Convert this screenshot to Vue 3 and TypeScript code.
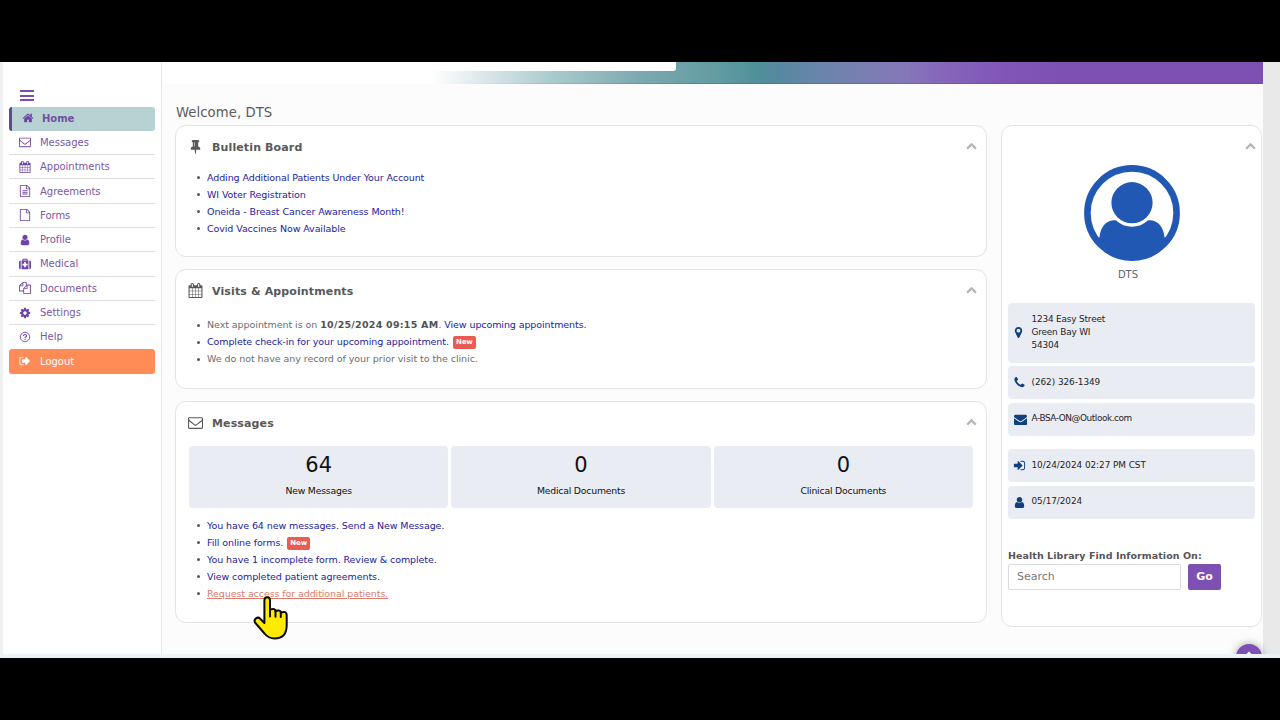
<script setup lang="ts">
interface NavItem {
  label: string
  icon: string
  kind?: 'active' | 'logout'
}

const calendar =
  'M192 1664h288v-288h-288v288zm352 0h320v-288h-320v288zm-352-352h288v-320h-288v320zm352 0h320v-320h-320v320zm-352-384h288v-288h-288v288zm736 736h320v-288h-320v288zm-384-736h320v-288h-320v288zm768 736h288v-288h-288v288zm-384-352h320v-320h-320v320zm-352-864v-288q0-13-9.5-22.5t-22.5-9.5h-64q-13 0-22.5 9.5t-9.5 22.5v288q0 13 9.5 22.5t22.5 9.5h64q13 0 22.5-9.5t9.5-22.5zm736 864h288v-320h-288v320zm-384-384h320v-288h-320v288zm384 0h288v-288h-288v288zm32-480v-288q0-13-9.5-22.5t-22.5-9.5h-64q-13 0-22.5 9.5t-9.5 22.5v288q0 13 9.5 22.5t22.5 9.5h64q13 0 22.5-9.5t9.5-22.5zm384-64v1280q0 52-38 90t-90 38h-1408q-52 0-90-38t-38-90v-1280q0-52 38-90t90-38h128v-96q0-66 47-113t113-47h64q66 0 113 47t47 113v96h384v-96q0-66 47-113t113-47h64q66 0 113 47t47 113v96h128q52 0 90 38t38 90z'
const fileOutline =
  'M1596 380q28 28 48 76t20 88v1152q0 40-28 68t-68 28h-1344q-40 0-68-28t-28-68v-1600q0-40 28-68t68-28h896q40 0 88 20t76 48zm-444-244v376h376q-10-29-22-41l-313-313q-12-12-41-22zm384 1528v-1024h-416q-40 0-68-28t-28-68v-416h-768v1536h1280z'

const icons: Record<string, string> = {
  home: 'M1472 992v480q0 26-19 45t-45 19h-384v-384h-256v384h-384q-26 0-45-19t-19-45v-480q0-1 .5-3t.5-3l575-474 575 474q1 2 1 6zm223-69l-62 74q-8 9-21 11h-3q-13 0-21-7l-692-577-692 577q-12 8-24 7-13-2-21-11l-62-74q-8-10-7-23.5t11-21.5l719-599q32-26 76-26t76 26l244 204v-195q0-14 9-23t23-9h192q14 0 23 9t9 23v408l219 182q10 8 11 21.5t-7 23.5z',
  mailOutline:
    'M1664 1504v-768q-32 36-69 66-268 206-426 338-51 43-83 67t-86.5 48.5-102.5 24.5h-2q-48 0-102.5-24.5t-86.5-48.5-83-67q-158-132-426-338-37-30-69-66v768q0 13 9.5 22.5t22.5 9.5h1472q13 0 22.5-9.5t9.5-22.5zm0-1051v-24.5l-.5-13-3-12.5-5.5-9-9-7.5-14-2.5h-1472q-13 0-22.5 9.5t-9.5 22.5q0 168 147 284 193 152 401 317 6 5 35 29.5t46 37.5 44.5 31.5 50.5 27.5 43 9h2q20 0 43-9t50.5-27.5 44.5-31.5 46-37.5 35-29.5q208-165 401-317 54-43 100.5-115.5t46.5-131.5zm128-37v1088q0 66-47 113t-113 47h-1472q-66 0-113-47t-47-113v-1088q0-66 47-113t113-47h1472q66 0 113 47t47 113z',
  calendar,
  file: fileOutline,
  fileText: fileOutline + 'M512 768h768v128h-768zM512 1024h768v128h-768zM512 1280h768v128h-768z',
  user: 'M1536 1399q0 109-62.5 187t-150.5 78h-854q-88 0-150.5-78t-62.5-187q0-85 8.5-160.5t31.5-152 58.5-131 94-89 134.5-34.5q131 128 313 128t313-128q76 0 134.5 34.5t94 89 58.5 131 31.5 152 8.5 160.5zm-256-887q0 159-112.5 271.5t-271.5 112.5-271.5-112.5-112.5-271.5 112.5-271.5 271.5-112.5 271.5 112.5 112.5 271.5z',
  medkit:
    'M1280 1088v-192q0-14-9-23t-23-9h-224v-224q0-14-9-23t-23-9h-192q-14 0-23 9t-9 23v224h-224q-14 0-23 9t-9 23v192q0 14 9 23t23 9h224v224q0 14 9 23t23 9h192q14 0 23-9t9-23v-224h224q14 0 23-9t9-23zm-640-704h512v-128h-512v128zm-384 0v1280h-32q-92 0-158-66t-66-158v-832q0-92 66-158t158-66h32zm1152 0v1280h-1024v-1280h128v-160q0-40 28-68t68-28h576q40 0 68 28t28 68v160h128zm384 224v832q0 92-66 158t-158 66h-32v-1280h32q92 0 158 66t66 158z',
  files:
    'M1696 384q40 0 68 28t28 68v1216q0 40-28 68t-68 28h-960q-40 0-68-28t-28-68v-288h-544q-40 0-68-28t-28-68v-672q0-40 20-88t48-76l408-408q28-28 76-48t88-20h416q40 0 68 28t28 68v328q68-40 128-40h416zm-544 213l-299 299h299v-299zm-640-384l-299 299h299v-299zm196 647l316-316v-416h-384v416q0 40-28 68t-68 28h-416v640h512v-256q0-40 20-88t48-76zm956 804v-1152h-384v416q0 40-28 68t-68 28h-416v640h896z',
  cog: 'M1152 896q0-106-75-181t-181-75-181 75-75 181 75 181 181 75 181-75 75-181zm512-109v222q0 12-8 23t-20 13l-185 28q-19 54-39 91 35 50 107 138 10 12 10 25t-9 23q-27 37-99 108t-94 71q-12 0-26-9l-138-108q-44 23-91 38-16 136-29 186-7 28-36 28h-222q-14 0-24.5-8.5t-11.5-21.5l-28-184q-49-16-90-37l-141 107q-10 9-25 9-14 0-25-11-126-114-165-168-7-10-7-23 0-12 8-23 15-21 51-66.5t54-70.5q-27-50-41-99l-183-27q-13-2-21-12.5t-8-23.5v-222q0-12 8-23t19-13l186-28q14-46 39-92-40-57-107-138-10-12-10-24 0-10 9-23 26-36 98.5-107.5t94.5-71.5q13 0 26 10l138 107q44-23 91-38 16-136 29-186 7-28 36-28h222q14 0 24.5 8.5t11.5 21.5l28 184q49 16 90 37l142-107q9-9 24-9 13 0 25 10 129 119 165 170 7 8 7 22 0 12-8 23-15 21-51 66.5t-54 70.5q26 50 41 98l183 28q13 2 21 12.5t8 23.5z',
  signOut:
    'M704 1440q0 4 1 20t.5 26.5-3 23.5-10 19.5-20.5 6.5h-320q-119 0-203.5-84.5t-84.5-203.5v-704q0-119 84.5-203.5t203.5-84.5h320q13 0 22.5 9.5t9.5 22.5q0 4 1 20t.5 26.5-3 23.5-10 19.5-20.5 6.5h-320q-66 0-113 47t-47 113v704q0 66 47 113t113 47h312l11.5 1 11.5 3 8 5.5 7 9 2 13.5zm928-544q0 26-19 45l-544 544q-19 19-45 19t-45-19-19-45v-288h-448q-26 0-45-19t-19-45v-384q0-26 19-45t45-19h448v-288q0-26 19-45t45-19 45 19l544 544q19 19 19 45z',
  signIn:
    'M1312 896q0 26-19 45l-544 544q-19 19-45 19t-45-19-19-45v-288h-448q-26 0-45-19t-19-45v-384q0-26 19-45t45-19h448v-288q0-26 19-45t45-19 45 19l544 544q19 19 19 45zm352-352v704q0 119-84.5 203.5t-203.5 84.5h-320q-13 0-22.5-9.5t-9.5-22.5q0-4-1-20t-.5-26.5 3-23.5 10-19.5 20.5-6.5h320q66 0 113-47t47-113v-704q0-66-47-113t-113-47h-312l-11.5-1-11.5-3-8-5.5-7-9-2-13.5q0-4-1-20t-.5-26.5 3-23.5 10-19.5 20.5-6.5h320q119 0 203.5 84.5t84.5 203.5z',
  pin: 'M1152 640q0-106-75-181t-181-75-181 75-75 181 75 181 181 75 181-75 75-181zm256 0q0 109-33 179l-364 774q-16 33-47.5 52t-67.5 19-67.5-19-46.5-52l-365-774q-33-70-33-179 0-212 150-362t362-150 362 150 150 362z',
  phone:
    'M1600 1240q0 27-10 70.5t-21 68.5q-21 50-122 106-94 51-186 51-27 0-53-3.5t-57.5-12.5-47-14.5-55.5-20.5-49-18q-98-35-175-83-127-79-264-216t-216-264q-48-77-83-175-3-9-18-49t-20.5-55.5-14.5-47-12.5-57.5-3.5-53q0-92 51-186 56-101 106-122 25-11 68.5-21t70.5-10q14 0 21 3 18 6 53 76 11 19 30 54t35 63.5 31 53.5q3 4 17.5 25t21.5 35.5 7 28.5q0 20-28.5 50t-62 55-62 53-28.5 46q0 9 5 22.5t8.5 20.5 14 24 11.5 19q76 137 174 235t235 174q2 1 19 11.5t24 14 20.5 8.5 22.5 5q18 0 46-28.5t53-62 55-62 50-28.5q14 0 28.5 7t35.5 21.5 25 17.5q25 15 53.5 31t63.5 35 54 30q70 35 76 53 3 7 3 21z',
  mail: 'M1792 710v794q0 66-47 113t-113 47h-1472q-66 0-113-47t-47-113v-794q44 49 101 87 362 246 497 345 57 42 92.5 65.5t94.5 48 110 24.5h2q51 0 110-24.5t94.5-48 92.5-65.5q170-123 498-345 57-39 100-87zm0-294q0 79-49 151t-122 123q-376 261-468 325-10 7-42.5 31t-54 38.5-52 32.5-57.5 27-50 9h-2q-23 0-50-9t-57.5-27-52-32.5-54-38.5-42.5-31q-91-64-262-182.5t-205-142.5q-62-42-117-115.5t-55-136.5q0-78 41.5-130t118.5-52h1472q65 0 112.5 47t47.5 113z',
  tack: 'M800 864v-448q0-14-9-23t-23-9-23 9-9 23v448q0 14 9 23t23 9 23-9 9-23zm672 352q0 26-19 45t-45 19h-429l-51 483q-2 12-10.5 20.5t-20.5 8.5h-1q-27 0-32-27l-76-485h-404q-26 0-45-19t-19-45q0-123 78.5-221.5t177.5-98.5v-512q-52 0-90-38t-38-90 38-90 90-38h640q52 0 90 38t38 90-38 90-90 38v512q99 0 177.5 98.5t78.5 221.5z',
  up: 'M1683 1331l-166 165q-19 19-45 19t-45-19l-531-531-531 531q-19 19-45 19t-45-19l-166-165q-19-19-19-45.5t19-45.5l742-741q19-19 45-19t45 19l742 741q19 19 19 45.5t-19 45.5z',
}

const nav: NavItem[] = [
  { label: 'Home', icon: 'home', kind: 'active' },
  { label: 'Messages', icon: 'mailOutline' },
  { label: 'Appointments', icon: 'calendar' },
  { label: 'Agreements', icon: 'fileText' },
  { label: 'Forms', icon: 'file' },
  { label: 'Profile', icon: 'user' },
  { label: 'Medical', icon: 'medkit' },
  { label: 'Documents', icon: 'files' },
  { label: 'Settings', icon: 'cog' },
  { label: 'Help', icon: 'help' },
  { label: 'Logout', icon: 'signOut', kind: 'logout' },
]

const bulletins: string[] = [
  'Adding Additional Patients Under Your Account',
  'WI Voter Registration',
  'Oneida - Breast Cancer Awareness Month!',
  'Covid Vaccines Now Available',
]

const stats = [
  { value: 64, label: 'New Messages' },
  { value: 0, label: 'Medical Documents' },
  { value: 0, label: 'Clinical Documents' },
]

const details = [
  { icon: 'pin', lines: ['1234 Easy Street', 'Green Bay WI', '54304'], kind: 'address' },
  { icon: 'phone', lines: ['(262) 326-1349'], kind: '' },
  { icon: 'mail', lines: ['A-BSA-ON@Outlook.com'], kind: 'email' },
  { icon: 'signIn', lines: ['10/24/2024 02:27 PM CST'], kind: '' },
  { icon: 'user', lines: ['05/17/2024'], kind: '' },
]
</script>

<template>
  <div class="screen">
    <div class="page">
      <aside class="sidebar">
        <button class="burger" aria-label="Menu"><i></i><i></i><i></i></button>
        <nav>
          <a v-for="n in nav" :key="n.label" class="nav-item" :class="n.kind">
            <svg v-if="n.icon === 'help'" class="ico" viewBox="0 0 1792 1792">
              <circle cx="896" cy="896" r="700" fill="none" stroke="currentColor" stroke-width="130" />
              <path d="M650 740q20-210 246-210t246 190q0 110-130 180t-116 140" fill="none" stroke="currentColor" stroke-width="170" />
              <path d="M800 1140h190v180h-190z" />
            </svg>
            <svg v-else class="ico" viewBox="0 0 1792 1792"><path :d="icons[n.icon]" /></svg>
            <span>{{ n.label }}</span>
          </a>
        </nav>
      </aside>

      <div class="body">
        <header class="banner"><div class="banner-field"></div></header>
        <div class="columns">
          <main class="main">
            <h1 class="welcome">Welcome, DTS</h1>

            <section class="card bulletin">
              <div class="card-head">
                <svg class="head-ico" viewBox="0 0 1792 1792"><path :d="icons.tack" /></svg>
                <h2>Bulletin Board</h2>
                <svg class="chev" viewBox="0 0 1792 1792"><path :d="icons.up" /></svg>
              </div>
              <ul>
                <li v-for="b in bulletins" :key="b"><a>{{ b }}</a></li>
              </ul>
            </section>

            <section class="card visits">
              <div class="card-head">
                <svg class="head-ico" viewBox="0 0 1792 1792"><path :d="icons.calendar" /></svg>
                <h2>Visits &amp; Appointments</h2>
                <svg class="chev" viewBox="0 0 1792 1792"><path :d="icons.up" /></svg>
              </div>
              <ul>
                <li>Next appointment is on <b>10/25/2024 09:15 AM</b>. <a>View upcoming appointments.</a></li>
                <li><a>Complete check-in for your upcoming appointment.</a><span class="new">New</span></li>
                <li>We do not have any record of your prior visit to the clinic.</li>
              </ul>
            </section>

            <section class="card messages">
              <div class="card-head">
                <svg class="head-ico" viewBox="0 0 1792 1792"><path :d="icons.mailOutline" /></svg>
                <h2>Messages</h2>
                <svg class="chev" viewBox="0 0 1792 1792"><path :d="icons.up" /></svg>
              </div>
              <div class="stats">
                <div v-for="s in stats" :key="s.label" class="stat">
                  <strong>{{ s.value }}</strong>
                  <span>{{ s.label }}</span>
                </div>
              </div>
              <ul>
                <li><a>You have 64 new messages. Send a New Message.</a></li>
                <li><a>Fill online forms.</a><span class="new">New</span></li>
                <li><a>You have 1 incomplete form. Review &amp; complete.</a></li>
                <li><a>View completed patient agreements.</a></li>
                <li><a class="hovered">Request access for additional patients.</a></li>
              </ul>
            </section>
          </main>

          <aside class="card profile">
            <svg class="chev" viewBox="0 0 1792 1792"><path :d="icons.up" /></svg>
            <svg class="avatar" viewBox="0 0 96 96">
              <circle cx="48" cy="48" r="44.6" fill="#fff" stroke="#2058b3" stroke-width="6.6" />
              <circle cx="48" cy="37.7" r="20.6" fill="#2058b3" />
              <path d="M15.500 72.300C16.500 61 23 54.500 31.800 55.300C41 64 55 64 64.200 55.300C73 54.500 79.500 61 80.500 72.300L83 74A43.500 43.500 0 0 1 13 74Z" fill="#2058b3" />
            </svg>
            <p class="who">DTS</p>
            <div class="details">
              <div v-for="d in details" :key="d.icon" class="detail" :class="[d.kind, d.icon]">
                <svg viewBox="0 0 1792 1792"><path :d="icons[d.icon]" /></svg>
                <p><span v-for="l in d.lines" :key="l">{{ l }}</span></p>
              </div>
            </div>
            <p class="library">Health Library Find Information On:</p>
            <form class="search" @submit.prevent>
              <input type="text" placeholder="Search" />
              <button type="submit">Go</button>
            </form>
          </aside>
        </div>
      </div>

      <div class="gutter"></div>
      <div class="to-top">
        <svg viewBox="0 0 1792 1792"><path :d="icons.up" /></svg>
      </div>
      <div class="taskbar"></div>
    </div>

    <svg class="pointer" viewBox="0 0 36 46">
      <path
        d="M11.400 24V5.500Q11.400 2.300 14.200 2.300T17 5.500V14.500Q22.500 13 22.500 16Q27.800 14.500 27.800 17.500Q33.700 15.500 33.700 20V30Q33.700 43.500 21.500 43.500Q15.500 43.500 11.500 38.500L2 27.500Q0.700 24.800 3 23.300T7.200 23.800L11.400 28Z"
        fill="#ffeb00" stroke="#0b0b08" stroke-width="2" stroke-linejoin="round" />
      <path d="M17 13V21.500M22.500 15V21.800M27.800 17V22" fill="none" stroke="#0b0b08" stroke-width="2" stroke-linecap="round" />
    </svg>
  </div>
</template>

<style>
body {
  margin: 0;
  background: #000;
}
</style>

<style scoped>
* {
  box-sizing: border-box;
}
.screen {
  position: relative;
  width: 1280px;
  height: 720px;
  padding: 62px 0;
  background: #000;
  overflow: hidden;
  font-family: Verdana, "DejaVu Sans", sans-serif;
}
svg {
  fill: currentColor;
  display: block;
  flex: none;
}
h1,
h2,
p,
ul {
  margin: 0;
  padding: 0;
}
.page {
  position: relative;
  display: flex;
  height: 596px;
  background: #fcfcfc;
  overflow: hidden;
}
.sidebar {
  width: 162px;
  flex: none;
  padding: 28px 6px 0 6px;
  background: #fff;
  border-left: 3px solid #f0f0f0;
  border-right: 1px solid #e6e6e9;
}
.burger {
  display: flex;
  flex-direction: column;
  gap: 2.500px;
  width: 14px;
  height: 11px;
  margin: 0 0 6px 11px;
  padding: 0;
  border: 0;
  background: none;
}
.burger i {
  height: 2px;
  width: 14px;
  flex: none;
  background: #7b4fae;
}
.nav-item {
  display: flex;
  align-items: center;
  height: 24.300px;
  padding-left: 10px;
  border-bottom: 1px solid #dedee0;
  color: #7b57a6;
  font-size: 10px;
  letter-spacing: -0.020px;
}
.ico {
  width: 12px;
  height: 12px;
  margin-right: 9px;
  color: #6f45a3;
}
.active {
  height: 23.800px;
  padding: 0 0 1px 10px;
  border: 0;
  border-left: 3px solid #64449a;
  border-radius: 3px;
  background: #b8d2d4;
  color: #70519f;
  font-weight: bold;
}
.active .ico {
  margin: 0 8.500px 0 -0.500px;
}
.nav-item:nth-last-child(2) {
  border-bottom-color: transparent;
}
.logout {
  border: 0;
  padding-bottom: 1px;
  border-radius: 3px;
  background: #ff8b57;
  color: #fff;
}
.logout .ico {
  color: #fff;
}
.body {
  width: 1101px;
  flex: none;
}
.banner {
  height: 22px;
  background:
    linear-gradient(90deg, rgba(90, 80, 110, 0) 300px, rgba(90, 80, 110, 0.4) 560px) 0 100% / 100% 1px no-repeat,
    linear-gradient(90deg, #fff 0, #fff 268px, #cfdfe4 340px, #a6c9cb 395px, #7ba8b1 480px, #5f9ba0 560px, #4f9199 595px, #5489a0 612px, #6686a8 650px, #7580b0 690px, #8577b8 745px, #8668b9 776px, #8055b8 845px, #7c51b3 900px, #7c51b3 100%);
}
.banner-field {
  width: 514px;
  height: 9px;
  background: #fff;
  border-radius: 0 0 3px 0;
}
.columns {
  display: flex;
  gap: 14px;
  padding-left: 13px;
}
.main {
  width: 812px;
  flex: none;
}
.welcome {
  height: 41px;
  padding: 20px 0 0 1px;
  font-size: 13.200px;
  line-height: 18px;
  font-weight: normal;
  letter-spacing: 0.080px;
  color: #5a5a5c;
}
.card {
  border: 1px solid #e4e4e6;
  border-radius: 11px;
  background: #fff;
}
.bulletin {
  height: 132px;
  margin-bottom: 12px;
}
.bulletin ul {
  margin-top: -0.500px;
}
.visits {
  height: 120px;
  margin-bottom: 12px;
}
.visits ul {
  padding-top: 3px;
}
.messages {
  height: 221.500px;
}
.card-head {
  display: flex;
  align-items: center;
  height: 43px;
  padding: 0 9.500px 0 12px;
  color: #58585a;
}
.head-ico {
  width: 15px;
  height: 15px;
  margin: -2px 9px 0 0;
}
h2 {
  font-size: 11px;
  line-height: 16px;
  letter-spacing: 0.130px;
}
.card-head .chev {
  margin: -5px 0 0 auto;
}
.chev {
  width: 11px;
  height: 11px;
  color: #b5b5b8;
}
ul {
  list-style: none;
}
li {
  display: flex;
  align-items: center;
  height: 17.100px;
  padding-left: 31px;
  font-size: 9.500px;
  letter-spacing: -0.060px;
  color: #6d6d70;
  white-space: pre;
}
li::before {
  content: "";
  width: 3px;
  height: 3px;
  margin: 1px 7.500px 0 -10.500px;
  border-radius: 50%;
  background: #55555a;
}
li a {
  color: #2322a0;
  letter-spacing: -0.090px;
}
li b {
  color: #525255;
  letter-spacing: 0.250px;
}
li .hovered {
  color: #dd7a6a;
  text-decoration: underline;
}
.new {
  height: 13px;
  margin: 2px 0 0 4px;
  padding: 0 3px;
  border-radius: 2px;
  background: #e95c52;
  color: #fff;
  font-size: 7px;
  line-height: 13px;
  font-weight: bold;
}
.stats {
  display: flex;
  gap: 3px;
  padding: 0 13px;
  margin: 1px 0 8.500px;
}
.stat {
  flex: 1;
  height: 62px;
  padding-top: 7px;
  border-radius: 4px;
  background: #e9ecf3;
  text-align: center;
  color: #111;
}
.stat strong {
  display: block;
  font-size: 21px;
  line-height: 24px;
  font-weight: normal;
}
.stat span {
  display: block;
  margin-top: 8px;
  font-size: 9.300px;
  line-height: 12px;
  letter-spacing: -0.200px;
}
.profile {
  position: relative;
  width: 261px;
  height: 501.500px;
  margin-top: 41px;
  padding: 0 6px;
  flex: none;
}
.profile > .chev {
  margin: 14px 0 0 236.500px;
}
.avatar {
  width: 96px;
  height: 96px;
  margin: 14px 0 0 76px;
}
.who {
  margin: 7px 0 21px;
  padding-right: 7px;
  text-align: center;
  font-size: 10px;
  line-height: 14px;
  color: #626266;
}
.details {
  display: flex;
  flex-direction: column;
  gap: 3.500px;
}
.detail {
  display: flex;
  align-items: center;
  height: 33px;
  padding-left: 6px;
  border-radius: 4px;
  background: #e9ecf3;
  color: #11407c;
}
.address {
  height: 59.500px;
}
.detail.signIn {
  margin-top: 10px;
}
.detail svg {
  width: 13px;
  height: 13px;
  margin-right: 4.500px;
}
.detail.pin svg {
  margin: 0 7px 0 -2.500px;
}
.detail.phone svg,
.detail.user svg,
.detail.signIn svg {
  margin: 0 5.500px 0 -1px;
}
.detail p {
  color: #232327;
  font-size: 8.900px;
  letter-spacing: -0.050px;
}
.detail.address p {
  letter-spacing: -0.160px;
}
.detail.email p {
  letter-spacing: -0.420px;
}
.detail span {
  display: block;
  line-height: 13.300px;
}
.library {
  margin-top: 30px;
  font-size: 9.500px;
  line-height: 13px;
  font-weight: bold;
  letter-spacing: 0.060px;
  color: #55555a;
}
.search {
  display: flex;
  gap: 7px;
  margin-top: 2px;
}
.search input {
  width: 173px;
  height: 26px;
  padding: 0 8px;
  border: 1px solid #dcdce0;
  border-radius: 2px;
  font: 11px "DejaVu Sans", sans-serif;
}
.search input::placeholder {
  color: #77777b;
}
.search button {
  width: 33px;
  height: 26px;
  padding: 0;
  border: 0;
  border-radius: 2px;
  background: #7c51b3;
  color: #fff;
  font: bold 11px "DejaVu Sans", sans-serif;
}
.gutter {
  flex: 1;
  background: #e9e9e9;
}
.to-top {
  position: absolute;
  left: 1236px;
  top: 582px;
  width: 26px;
  height: 26px;
  border-radius: 50%;
  background: #7c51b3;
  color: #fff;
  box-shadow: 0 0 9px rgba(0, 0, 0, 0.350);
}
.to-top svg {
  width: 10px;
  height: 10px;
  margin: 5px auto 0;
}
.taskbar {
  position: absolute;
  left: 0;
  right: 0;
  bottom: 0;
  height: 4px;
  background: #ebf2f8;
}
.pointer {
  position: absolute;
  left: 253px;
  top: 595px;
  width: 36px;
  height: 46px;
}
</style>
